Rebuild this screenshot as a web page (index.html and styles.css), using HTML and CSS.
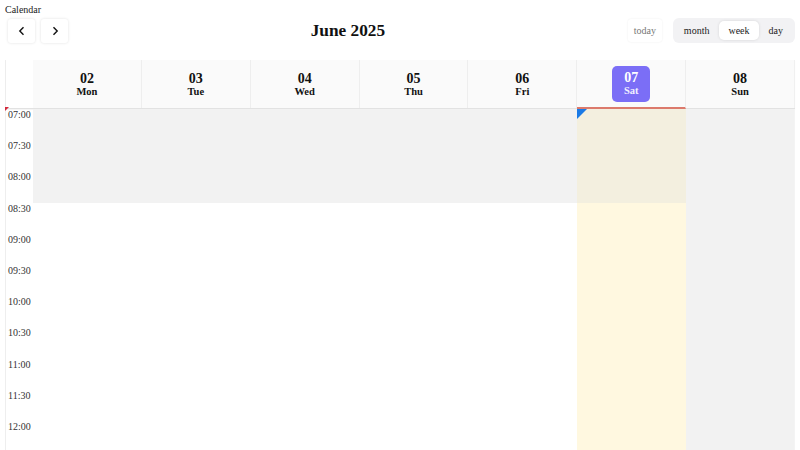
FILE: index.html
```html
<!DOCTYPE html>
<html>
<head>
<meta charset="utf-8">
<link rel="stylesheet" href="styles.css">
</head>
<body>
<div class="app">
  <div class="caption">Calendar</div>
  <div class="toolbar">
    <div class="nav">
      <button class="navbtn"><svg width="10" height="10" viewBox="0 0 10 10"><path d="M6.5 1.2 2.8 5l3.7 3.8" fill="none" stroke="#111" stroke-width="1.4"/></svg></button>
      <button class="navbtn"><svg width="10" height="10" viewBox="0 0 10 10"><path d="M3.5 1.2 7.2 5 3.5 8.8" fill="none" stroke="#111" stroke-width="1.4"/></svg></button>
    </div>
    <h1 class="title">June 2025</h1>
    <div class="views">
      <button class="today">today</button>
      <div class="seg">
        <button class="segbtn">month</button>
        <button class="segbtn active">week</button>
        <button class="segbtn">day</button>
      </div>
    </div>
  </div>
  <div class="cal">
    <div class="head">
      <div class="hcell gutter"></div>
      <div class="hcell"><div class="hdate"><b class="num">02</b><b class="dow">Mon</b></div></div>
      <div class="hcell"><div class="hdate"><b class="num">03</b><b class="dow">Tue</b></div></div>
      <div class="hcell"><div class="hdate"><b class="num">04</b><b class="dow">Wed</b></div></div>
      <div class="hcell"><div class="hdate"><b class="num">05</b><b class="dow">Thu</b></div></div>
      <div class="hcell"><div class="hdate"><b class="num">06</b><b class="dow">Fri</b></div></div>
      <div class="hcell today-col"><div class="hdate sel"><b class="num">07</b><b class="dow">Sat</b></div></div>
      <div class="hcell last"><div class="hdate"><b class="num">08</b><b class="dow">Sun</b></div></div>
    </div>
    <div class="body">
      <div class="times">
        <span class="now-mark"></span>
        <div class="slot">07:00</div>
        <div class="slot">07:30</div>
        <div class="slot">08:00</div>
        <div class="slot">08:30</div>
        <div class="slot">09:00</div>
        <div class="slot">09:30</div>
        <div class="slot">10:00</div>
        <div class="slot">10:30</div>
        <div class="slot">11:00</div>
        <div class="slot">11:30</div>
        <div class="slot">12:00</div>
        <div class="slot"></div>
      </div>
      <div class="day"><div class="off"></div></div>
      <div class="day"><div class="off"></div></div>
      <div class="day"><div class="off"></div></div>
      <div class="day"><div class="off"></div></div>
      <div class="day"><div class="off"></div></div>
      <div class="day sat"><span class="corner"></span><div class="off"></div></div>
      <div class="day sun"></div>
    </div>
  </div>
</div>
</body>
</html>
```
FILE: styles.css
```css
html, body {
  margin: 0;
  height: 100%;
  overflow: hidden;
  background: #fff;
}
body {
  font-family: "Liberation Serif", "Times New Roman", serif;
  font-size: 10px;
  color: #222;
}
.app {
  padding: 3px 5px 0 5px;
}
.caption {
  line-height: 14px;
  color: #222;
}
.toolbar {
  display: flex;
  justify-content: space-between;
  align-items: center;
  height: 25px;
  margin-top: 1px;
}
.nav {
  display: flex;
  gap: 6px;
  padding-left: 3px;
}
button {
  font-family: inherit;
  font-size: 10px;
  border: none;
  background: #fff;
  cursor: pointer;
  color: #222;
  padding: 0;
}
.navbtn {
  width: 27px;
  height: 24px;
  border-radius: 3px;
  box-shadow: 0 0 3px rgba(0,0,0,0.12);
  display: flex;
  align-items: center;
  justify-content: center;
}
.title {
  margin: 0;
  font-size: 17.3px;
  font-weight: bold;
  color: #111;
}
.views {
  display: flex;
  align-items: center;
  gap: 11px;
}
.today {
  width: 34px;
  height: 23px;
  color: #777;
  border-radius: 3px;
  box-shadow: 0 0 2px rgba(0,0,0,0.08);
}
.seg {
  display: flex;
  align-items: center;
  background: #f2f2f4;
  border-radius: 6px;
  height: 25px;
  padding: 0 3px 0 2px;
  gap: 1px;
}
.segbtn {
  background: transparent;
  height: 19px;
  padding: 0 9px;
  border-radius: 5px;
  color: #222;
}
.segbtn.active {
  background: #fff;
  box-shadow: 0 0 3px rgba(0,0,0,0.12);
}
.cal {
  margin-top: 17px;
  border-left: 1px solid #eee;
}
.head {
  display: grid;
  grid-template-columns: 27px repeat(7, 1fr);
  height: 48px;
  border-bottom: 1px solid #e2e2e2;
  box-shadow: 0 1px 1px rgba(0,0,0,0.04);
  position: relative;
}
.hcell {
  background: #fafafa;
  border-right: 1px solid #eee;
  display: flex;
  align-items: center;
  justify-content: center;
}
.hcell.gutter {
  background: #fff;
  border-right: none;
}
.hcell.today-col {
  border-bottom: 2px solid #dc7a6c;
  margin-bottom: -1px;
}
.hcell.last {
  border-right: 1px solid #f0f0f0;
}
.hdate {
  display: flex;
  flex-direction: column;
  align-items: center;
  color: #111;
}
.hdate .num {
  font-size: 14px;
  line-height: 15px;
}
.hdate .dow {
  font-size: 10.5px;
  line-height: 12px;
}
.hdate.sel {
  background: #7b6ef6;
  color: #fff;
  width: 38px;
  height: 36px;
  border-radius: 5px;
  justify-content: center;
}
.hdate.sel .dow { color: #f2f0ff; }
.body {
  display: grid;
  grid-template-columns: 27px repeat(7, 1fr);
}
.times {
  position: relative;
}
.slot {
  height: 31.2px;
  box-sizing: border-box;
  padding: 1px 0 0 2px;
  line-height: 10px;
  color: #333;
}
.now-mark {
  position: absolute;
  left: -1px;
  top: -2px;
  width: 0;
  height: 0;
  border-top: 4px solid #d2283c;
  border-right: 4px solid transparent;
}
.day {
  position: relative;
  background: #fff;
}
.off {
  height: 93.6px;
  background: #f2f2f2;
}
.day.sat {
  background: #fff8e0;
}
.day.sat .off {
  background: #f3efdf;
}
.day.sun {
  background: #f2f2f2;
  border-right: 1px solid #f4f4f4;
}
.corner {
  position: absolute;
  left: 0;
  top: 0;
  width: 0;
  height: 0;
  border-top: 10px solid #1a7ae6;
  border-right: 10px solid transparent;
}
```
